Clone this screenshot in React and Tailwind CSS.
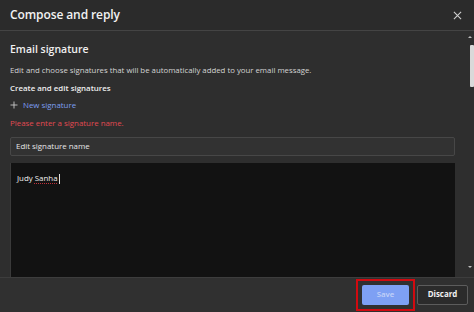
import React from 'react';

export default function App() {
  return (
    <div className="w-[474px] h-[312px] bg-[#2e2e2e] text-white flex flex-col overflow-hidden" style={{ fontFamily: '"Open Sans", "Noto Sans", sans-serif' }}>
      {/* Header */}
      <div className="h-[31px] shrink-0 flex items-center justify-between pl-[10px] pr-[12px] bg-[#2b2b2b] border-b border-[#444]">
        <h1 className="text-[12px] font-semibold text-[#f2f2f2] tracking-[-0.1px]">Compose and reply</h1>
        <svg width="9" height="9" viewBox="0 0 10 10" className="text-[#cfcfcf]">
          <path d="M1 1 L9 9 M9 1 L1 9" stroke="currentColor" strokeWidth="1.2" />
        </svg>
      </div>

      {/* Body */}
      <div className="flex-1 flex min-h-0">
        <div className="flex-1 flex flex-col pl-[10px] pr-[11px] pt-[10px] min-w-0">
          <h2 className="text-[10.5px] font-semibold text-[#f0f0f0] leading-[16px]">Email signature</h2>
          <p className="mt-[7px] text-[7.8px] text-[#d4d4d4] leading-[12px]">
            Edit and choose signatures that will be automatically added to your email message.
          </p>
          <h3 className="mt-[6px] text-[7.9px] font-semibold text-[#eeeeee] leading-[12px]">Create and edit signatures</h3>
          <button className="mt-[5px] flex items-center gap-[5px] text-[7.9px] text-[#7d9ef0] leading-[12px]">
            <svg width="8" height="8" viewBox="0 0 8 8" className="text-[#c8c8c8]">
              <path d="M4 0.5 V7.5 M0.5 4 H7.5" stroke="currentColor" strokeWidth="0.9" />
            </svg>
            New signature
          </button>
          <p className="mt-[6px] text-[7.9px] text-[#e04a52] leading-[12px]">Please enter a signature name.</p>
          <div className="mt-[8px] h-[19px] flex items-center px-[5px] bg-[#323232] border border-[#474747] rounded-[2px] text-[7.9px] text-[#e6e6e6]">
            Edit signature name
          </div>
          <div className="mt-[7px] flex-1 bg-[#121212] border-l border-[#3a3a3a] pt-[9px] pl-[6px] text-[7.9px] text-[#f0f0f0] leading-[12px]">
            Judy <span className="underline decoration-dotted decoration-[#c0303a] underline-offset-2">Sanha</span>
            <span className="inline-block w-[1px] h-[10px] bg-[#e0e0e0] align-middle ml-[1px]" />
          </div>
        </div>
        {/* Scrollbar */}
        <div className="w-[8px] flex flex-col items-center pt-[5px] pb-[9px] bg-[#2e2e2e]">
          <div className="w-0 h-0 border-l-[2px] border-r-[2px] border-b-[2px] border-l-transparent border-r-transparent border-b-[#bdbdbd]" />
          <div className="mt-[7px] w-[4px] h-[42px] bg-[#d9d9d9] rounded-[1px] self-end" />
          <div className="flex-1" />
          <div className="w-0 h-0 border-l-[2px] border-r-[2px] border-t-[2px] border-l-transparent border-r-transparent border-t-[#bdbdbd]" />
        </div>
      </div>

      {/* Footer */}
      <div className="h-[35px] shrink-0 flex items-center justify-end pr-[6px] gap-[2px] bg-[#303030] border-t border-[#3d3d3d]">
        <div className="p-[4px] border-[2px] border-[#d10a10]">
          <button className="block w-[47px] h-[20px] bg-[#7ea0f4] rounded-[2px] text-[7.9px] font-semibold text-[#c3d2f8]">Save</button>
        </div>
        <button className="w-[51px] h-[20px] bg-[#2b2b2b] border border-[#5c5c5c] rounded-[2px] text-[7.9px] font-bold text-[#f2f2f2]">Discard</button>
      </div>
    </div>
  );
}
